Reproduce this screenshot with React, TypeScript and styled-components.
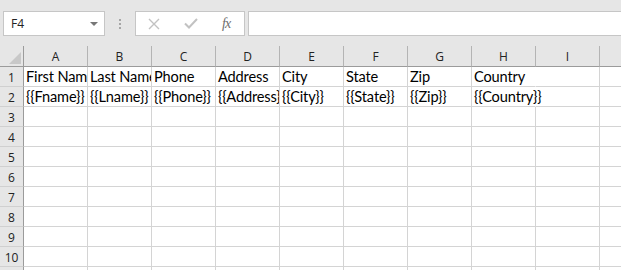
import React from "react"
import styled, { createGlobalStyle } from "styled-components"

const GlobalStyle = createGlobalStyle`
  html, body {
    margin: 0;
    padding: 0;
    background: #e6e6e6;
    overflow: hidden;
  }
`

const Page = styled.div`
  width: 621px;
  height: 270px;
  overflow: hidden;
  background: #e6e6e6;
  font-family: "Open Sans", "Noto Sans", sans-serif;
`

const Toolbar = styled.div`
  display: flex;
  align-items: stretch;
  height: 46px;
  box-sizing: border-box;
  padding: 11px 0 10px 3px;
`

const NameBox = styled.div`
  width: 102px;
  box-sizing: border-box;
  display: flex;
  align-items: center;
  justify-content: space-between;
  padding: 0 6px 0 7px;
  background: #fff;
  border: 1px solid #c6c6c6;
  font-size: 12px;
  color: #222;
`

const DropArrow = styled.span`
  width: 0;
  height: 0;
  border-left: 4px solid transparent;
  border-right: 4px solid transparent;
  border-top: 4px solid #777;
  margin-top: 1px;
`

const Grip = styled.div`
  width: 30px;
  display: flex;
  flex-direction: column;
  align-items: center;
  justify-content: center;
  gap: 2px;

  span {
    width: 2px;
    height: 2px;
    background: #a6a6a6;
  }
`

const FuncBox = styled.div`
  width: 110px;
  box-sizing: border-box;
  display: flex;
  align-items: center;
  background: #fff;
  border: 1px solid #c6c6c6;
  padding-left: 12px;
  gap: 24px;
`

const FxLabel = styled.span`
  font-family: "Liberation Serif", serif;
  font-style: italic;
  font-size: 14px;
  color: #6e6e6e;
  letter-spacing: -1px;
`

const FormulaInput = styled.div`
  flex: 1;
  margin-left: 3px;
  margin-right: -2px;
  background: #fff;
  border: 1px solid #c6c6c6;
`

const Sheet = styled.div`
  display: grid;
  grid-template-columns: 24px repeat(10, 64px);
  grid-template-rows: 21px repeat(11, 20px);
`

const Corner = styled.div`
  position: relative;
  background: #e6e6e6;
  border-right: 1px solid #9b9b9b;
  border-bottom: 1px solid #9b9b9b;
  box-sizing: border-box;

  &::after {
    content: "";
    position: absolute;
    right: 2px;
    bottom: 2px;
    width: 0;
    height: 0;
    border-left: 12px solid transparent;
    border-bottom: 12px solid #c8c8c8;
  }
`

const ColHead = styled.div`
  display: flex;
  align-items: center;
  justify-content: center;
  box-sizing: border-box;
  background: #e6e6e6;
  border-right: 1px solid #b4b4b4;
  border-bottom: 1px solid #9b9b9b;
  font-size: 12px;
  color: #222;
  padding-top: 1px;
`

const RowHead = styled.div`
  display: flex;
  align-items: center;
  justify-content: center;
  box-sizing: border-box;
  background: #e6e6e6;
  border-right: 1px solid #9b9b9b;
  border-bottom: 1px solid #d0d0d0;
  font-size: 12px;
  color: #222;
  padding-top: 1px;
`

const Cell = styled.div<{ $spill?: boolean }>`
  position: relative;
  box-sizing: border-box;
  background: #fff;
  border-right: 1px solid ${p => (p.$spill ? "#fff" : "#d4d4d4")};
  border-bottom: 1px solid #d4d4d4;
  font-family: "Lato", "Liberation Sans", sans-serif;
  font-size: 14.6px;
  letter-spacing: -0.15px;
  color: #000;
  white-space: nowrap;
  overflow: ${p => (p.$spill ? "visible" : "hidden")};
  z-index: ${p => (p.$spill ? 1 : 0)};
  padding: 2px 0 0 2px;
  line-height: 16px;
`

const columns = ["A", "B", "C", "D", "E", "F", "G", "H", "I", "J"]

const data: string[][] = [
  ["First Name", "Last Name", "Phone", "Address", "City", "State", "Zip", "Country"],
  ["{{Fname}}", "{{Lname}}", "{{Phone}}", "{{Address}}", "{{City}}", "{{State}}", "{{Zip}}", "{{Country}}"],
]

function CrossIcon() {
  return (
    <svg width="12" height="12" viewBox="0 0 12 12">
      <path d="M1 1 L11 11 M11 1 L1 11" stroke="#c2c2c2" strokeWidth="1.4" fill="none" />
    </svg>
  )
}

function CheckIcon() {
  return (
    <svg width="14" height="11" viewBox="0 0 14 11">
      <path d="M1 5.5 L5 9.5 L13 1" stroke="#c2c2c2" strokeWidth="2" fill="none" />
    </svg>
  )
}

export default function App() {
  const rows = Array.from({ length: 11 }, (_, i) => i + 1)

  return (
    <Page>
      <GlobalStyle />
      <Toolbar>
        <NameBox>
          F4
          <DropArrow />
        </NameBox>
        <Grip>
          <span />
          <span />
          <span />
        </Grip>
        <FuncBox>
          <CrossIcon />
          <CheckIcon />
          <FxLabel>fx</FxLabel>
        </FuncBox>
        <FormulaInput />
      </Toolbar>
      <Sheet>
        <Corner />
        {columns.map(c => (
          <ColHead key={c}>{c}</ColHead>
        ))}
        {rows.map(r => (
          <React.Fragment key={r}>
            <RowHead>{r}</RowHead>
            {columns.map((c, ci) => {
              const row = data[r - 1] || []
              const text = row[ci] || ""
              const spill = text !== "" && !row[ci + 1]
              return (
                <Cell key={c} $spill={spill}>
                  {text}
                </Cell>
              )
            })}
          </React.Fragment>
        ))}
      </Sheet>
    </Page>
  )
}
